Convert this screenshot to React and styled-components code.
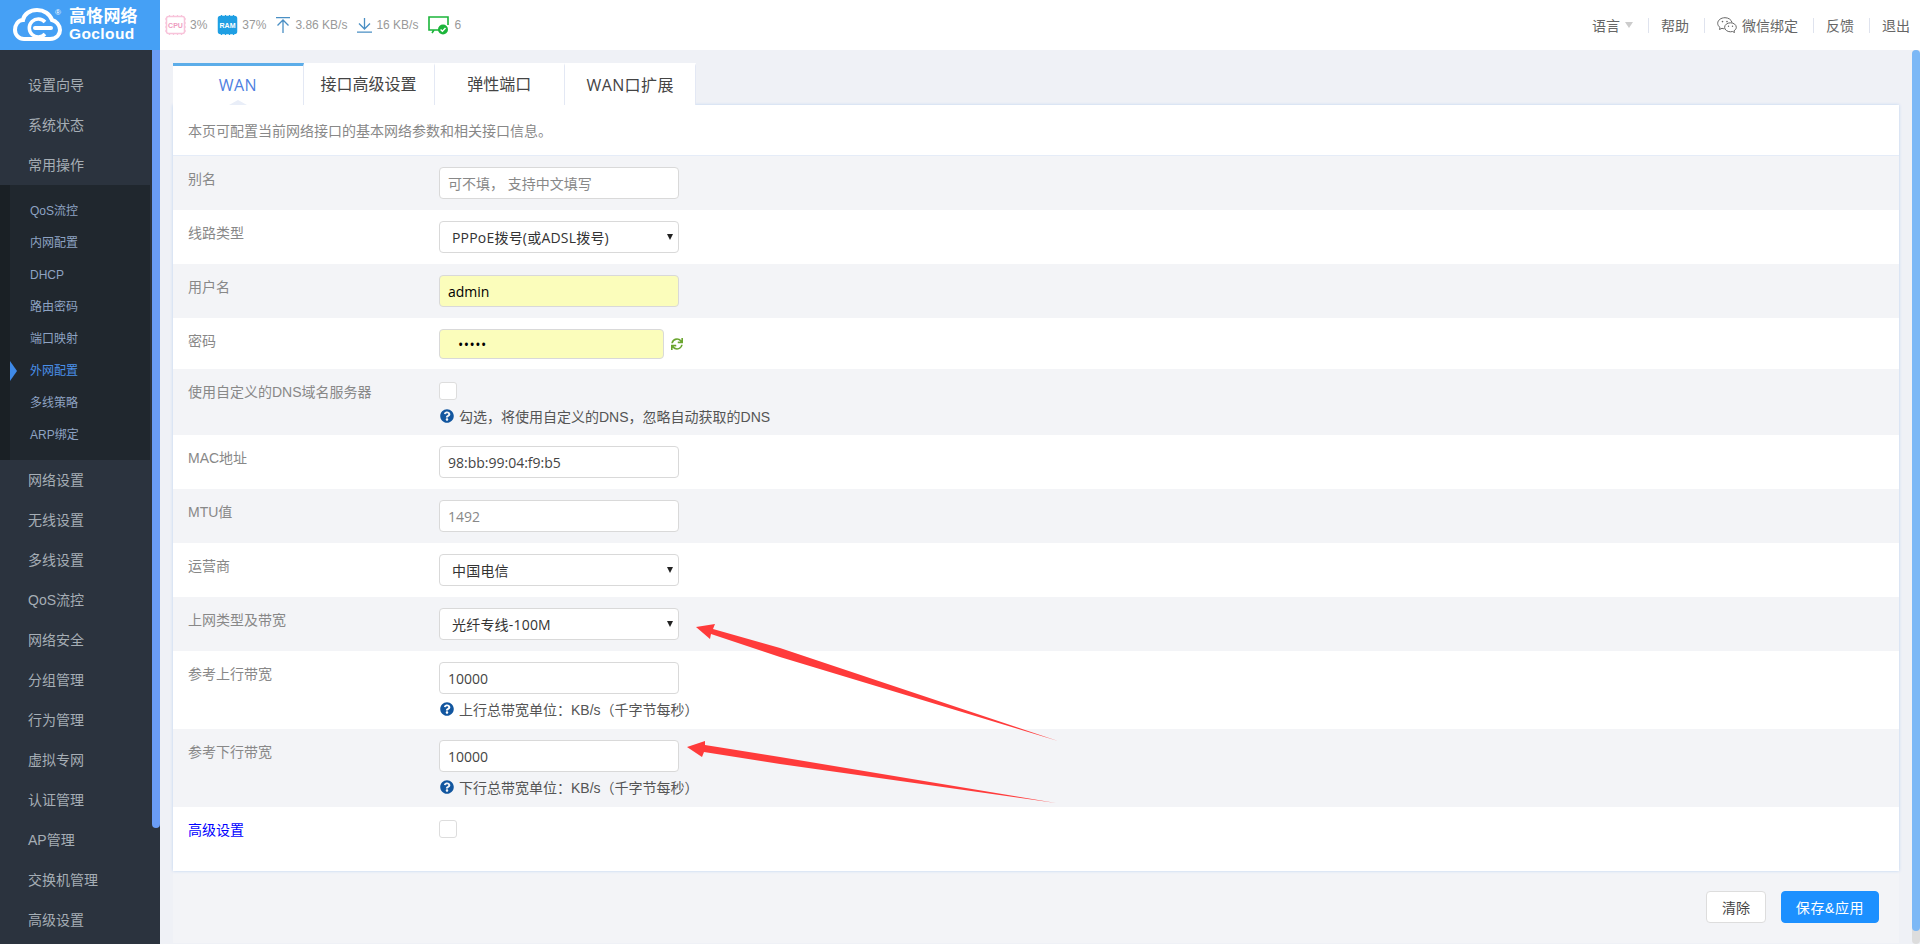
import React from "react"
import styled, { createGlobalStyle } from "styled-components"
import { FaQuestionCircle, FaSync } from "react-icons/fa"

const GlobalStyle = createGlobalStyle`
  html, body {
    margin: 0;
    padding: 0;
    height: 100%;
    overflow: hidden;
    font-family: "Liberation Sans", "Noto Sans CJK SC", sans-serif;
  }
  * { box-sizing: border-box; }
`

const Page = styled.div`
  width: 1920px;
  height: 944px;
  display: flex;
  flex-direction: column;
  overflow: hidden;
  background: #eff1f6;
`

/* top bar */
const Header = styled.header`
  flex: 0 0 50px;
  display: flex;
  align-items: center;
  background: #fff;
`
const Logo = styled.div`
  width: 160px;
  height: 50px;
  flex: none;
  display: flex;
  align-items: center;
  padding-left: 12px;
  background: #45a0f5;
  color: #fff;
`
const LogoText = styled.div`
  margin-left: 5px;
  display: flex;
  flex-direction: column;
  line-height: 1;
`
const LogoCn = styled.span`
  font-size: 17px;
  font-weight: 700;
  letter-spacing: 0.2px;
  height: 18px;
  line-height: 18px;
`
const LogoEn = styled.span`
  font-size: 15.5px;
  font-weight: 700;
  letter-spacing: 0.4px;
  line-height: 16px;
`
const StatusBar = styled.div`
  display: flex;
  align-items: center;
  gap: 10px;
  padding-left: 5px;
  font-size: 12px;
  color: #999;
`
const StatusItem = styled.span`
  display: flex;
  align-items: center;
  gap: ${(p) => p.$gap || 4}px;
`
const HeaderLinks = styled.nav`
  margin-left: auto;
  padding-right: 10px;
  display: flex;
  align-items: center;
  font-size: 14px;
  color: #666;
`
const HeaderLink = styled.span`
  display: flex;
  align-items: center;
  gap: 5px;
`
const Caret = styled.i`
  width: 0;
  height: 0;
  border-left: 4px solid transparent;
  border-right: 4px solid transparent;
  border-top: 6px solid #ccc;
`
const Sep = styled.i`
  width: 1px;
  height: 15px;
  margin: 0 12px 0 15px;
  background: #dfe3ee;
`

/* sidebar */
const Body = styled.div`
  flex: 1;
  display: flex;
  min-height: 0;
`
const Sidebar = styled.aside`
  width: 160px;
  flex: none;
  display: flex;
  background: #2b333e;
`
const Menu = styled.ul`
  width: 152px;
  margin: 0;
  padding: 15px 0 0;
  list-style: none;
`
const MenuItem = styled.li`
  height: 40px;
  line-height: 40px;
  padding-left: 28px;
  font-size: 14px;
  color: #a6aeb5;
`
const SubMenu = styled.ul`
  margin: 0 2px 0 0;
  padding: 10px 0 9px 20px;
  list-style: none;
  height: 275px;
  background: #20272e;
  border-left: 10px solid #1a2025;
`
const SubItem = styled.li`
  position: relative;
  height: 32px;
  line-height: 32px;
  font-size: 12px;
  color: ${(p) => (p.$active ? "#4a90ea" : "#8ea3c3")};
  &::before {
    content: "";
    display: ${(p) => (p.$active ? "block" : "none")};
    position: absolute;
    left: -20px;
    top: 6px;
    border-top: 10px solid transparent;
    border-bottom: 10px solid transparent;
    border-left: 7px solid #3f8ae8;
  }
`
const SideTrack = styled.div`
  width: 8px;
  flex: none;
`
const SideThumb = styled.div`
  height: 778px;
  background: #6a9cf5;
  border-radius: 0 0 4px 4px;
`

/* main area */
const Main = styled.main`
  flex: 1;
  display: flex;
  min-width: 0;
`
const Content = styled.div`
  flex: 1;
  min-width: 0;
  padding: 13px 13px 1px;
  display: flex;
  flex-direction: column;
`
const PageTrack = styled.div`
  width: 8px;
  flex: none;
  background: #ddd;
  border-radius: 4px;
`
const PageThumb = styled.div`
  height: 881px;
  background: #7cb8f6;
  border-radius: 4px;
`
const Tabs = styled.div`
  display: flex;
  flex: none;
`
const Tab = styled.div`
  position: relative;
  width: 130.75px;
  height: 42px;
  padding-bottom: 2px;
  line-height: 20px;
  display: flex;
  align-items: center;
  justify-content: center;
  background: #fff;
  border-top: 3px solid ${(p) => (p.$active ? "#5cade9" : "#fff")};
  border-right: 1px solid #e3e8f4;
  font-size: 16px;
  color: ${(p) => (p.$active ? "#4f80e1" : "#444")};
  &::after {
    content: "";
    display: ${(p) => (p.$active ? "block" : "none")};
    position: absolute;
    left: 50%;
    bottom: 0;
    margin-left: -9px;
    border-left: 9px solid transparent;
    border-right: 9px solid transparent;
    border-bottom: 5px solid #e9eef8;
  }
`
const TabLatin = styled.span`
  font-family: "Open Sans", "Noto Sans CJK SC", sans-serif;
  letter-spacing: 0.4px;
`
const Sheet = styled.div`
  flex: 1;
  display: flex;
  flex-direction: column;
  background: #f3f4f7;
`
const Panel = styled.section`
  background: #fff;
  box-shadow: 0 0 3px #bcd2f2;
`
const Intro = styled.div`
  height: 51px;
  padding: 16px 15px 0;
  line-height: 20px;
  font-size: 14px;
  color: #888;
  border-bottom: 1px solid #e5ecf8;
`
const Row = styled.div`
  display: grid;
  grid-template-columns: 266px 1fr;
  height: ${(p) => p.$height || 54}px;
  background: ${(p) => (p.$shade ? "#f3f4f7" : "#fff")};
`
const Label = styled.div`
  padding: 13px 0 0 15px;
  line-height: 20px;
  font-size: 14px;
  color: ${(p) => (p.$link ? "#0000ff" : "#888")};
`
const Field = styled.div`
  padding-top: ${(p) => p.$top || 11}px;
`
const Inline = styled.div`
  display: flex;
  align-items: center;
  gap: 7px;
`
const Input = styled.input`
  display: block;
  width: ${(p) => p.$width || 240}px;
  height: ${(p) => p.$h || 32}px;
  padding: 0 0 0 ${(p) => p.$pad || 8}px;
  border: 1px solid #d9d9d9;
  border-radius: 4px;
  outline: none;
  background: ${(p) => (p.$filled ? "#fbfdbb" : "#fff")};
  font-family: "Open Sans", "Noto Sans CJK SC", sans-serif;
  font-size: 14px;
  letter-spacing: ${(p) => (p.$pad ? "0.5px" : "normal")};
  color: ${(p) => (p.$filled ? "#000" : p.$muted ? "#888" : "#444")};
  &::placeholder {
    color: #888;
    opacity: 1;
  }
`
const SelectWrap = styled.div`
  position: relative;
  width: 240px;
  &::after {
    content: "";
    position: absolute;
    right: 6px;
    top: 13px;
    border-left: 3px solid transparent;
    border-right: 3px solid transparent;
    border-top: 6px solid #222;
  }
`
const Select = styled.select`
  display: block;
  width: 100%;
  height: 32px;
  padding: 0 0 0 12px;
  border: 1px solid #d9d9d9;
  border-radius: 4px;
  outline: none;
  appearance: none;
  background: #fff;
  font-family: "Open Sans", "Noto Sans CJK SC", sans-serif;
  font-size: 14px;
  letter-spacing: 0.2px;
  color: #333;
`
const Check = styled.input`
  display: block;
  width: 18px;
  height: 18px;
  margin: 0;
  appearance: none;
  background: #fff;
  border: 1px solid #ddd;
  border-radius: 3px;
`
const Help = styled.div`
  display: flex;
  align-items: center;
  gap: 5px;
  height: 20px;
  margin-top: ${(p) => p.$top || 5}px;
  font-size: 14px;
  color: #555;
  svg {
    color: #12569f;
    margin-left: 1px;
  }
`
const Footer = styled.div`
  flex: 1;
  display: flex;
  justify-content: flex-end;
  gap: 15px;
  padding: 20px 20px 0 0;
`
const Button = styled.button`
  height: 32px;
  width: ${(p) => p.$width}px;
  padding: 0;
  border: 1px solid ${(p) => (p.$primary ? "#1c90ff" : "#ddd")};
  border-radius: 4px;
  background: ${(p) => (p.$primary ? "#1c90ff" : "#fff")};
  font-family: "Liberation Sans", "Noto Sans CJK SC", sans-serif;
  font-size: 14px;
  letter-spacing: ${(p) => (p.$primary ? "0.6px" : "normal")};
  color: ${(p) => (p.$primary ? "#fff" : "#444")};
`
const Overlay = styled.svg`
  position: fixed;
  left: 0;
  top: 0;
  pointer-events: none;
`

const LogoMark = () => (
  <svg width="52" height="36" viewBox="12 8 52 36" fill="none" stroke="#fff">
    <path
      strokeWidth="4"
      d="M24 40H50C57 40 60 35 60 31C60 26 56 22 52 21C50 15 44 11 37 11C30 11 24 15 23 21C18 21 15 26 15 31C15 36 19 40 24 40Z"
    />
    <path strokeWidth="3.5" d="M45 23A9 9 0 1 0 45 35" />
    <path strokeWidth="4" strokeLinecap="round" d="M35 29H51" />
    <text x="58" y="16" fontSize="8" fill="#fff" stroke="none" textAnchor="middle">®</text>
  </svg>
)

const ChipIcon = ({ label, solid }) => {
  const c = solid ? "#1f9fe3" : "#f8c4da"
  const teeth = [4, 8, 12, 16]
  return (
    <svg width="21" height="20" viewBox="0 0 21 20">
      {teeth.map((x) => (
        <path key={x} d={`M${x + 0.5} 0V20`} stroke={c} strokeWidth="1.2" />
      ))}
      {teeth.map((y) => (
        <path key={y} d={`M0 ${y}H21`} stroke={solid ? "none" : c} strokeWidth="1.2" />
      ))}
      <rect
        x="1.5"
        y="1.5"
        width="18"
        height="17"
        rx="2"
        fill={solid ? c : "#fff"}
        stroke={c}
        strokeWidth="1.5"
      />
      <text
        x="10.5"
        y="12.5"
        fontSize="7"
        fontWeight="700"
        textAnchor="middle"
        fill={solid ? "#fff" : "#ee9cc0"}
        fontFamily="Liberation Sans"
      >
        {label}
      </text>
    </svg>
  )
}

const UpIcon = () => (
  <svg width="14" height="16" viewBox="0 0 14 16" fill="none" stroke="#4a8fc4" strokeWidth="1.3">
    <path d="M0 .7H14M7 3V16M1.5 8.5L7 3L12.5 8.5" />
  </svg>
)

const DownIcon = () => (
  <svg width="15" height="15" viewBox="0 0 15 15" fill="none" stroke="#4a8fc4" strokeWidth="1.3">
    <path d="M0 14.2H15M7.5 0V11M2 5.5L7.5 11L13 5.5" />
  </svg>
)

const ScreenIcon = () => (
  <svg width="21" height="19" viewBox="0 0 21 19" fill="none">
    <path d="M6 14H1V1H20V9M12 14H6L4 17" stroke="#1bb53a" strokeWidth="1.6" />
    <circle cx="15" cy="13.5" r="5" fill="#1bb53a" />
    <path d="M12.6 13.5L14.4 15.3L17.5 12" stroke="#fff" strokeWidth="1.4" />
  </svg>
)

const WechatIcon = () => (
  <svg width="20" height="16" viewBox="0 0 20 16" fill="none" stroke="#666" strokeWidth="1">
    <path d="M8 .7C4 .7 .7 3.2 .7 6.3C.7 8 1.7 9.5 3 10.5L2.5 12.5L5 11.3C5.8 11.6 6.5 11.7 7.3 11.8" />
    <path d="M8 .7C11.5 .7 14.5 2.8 15 5.6" />
    <path d="M13.5 5.8C10.3 5.8 7.6 7.8 7.6 10.3C7.6 12.8 10.3 14.8 13.5 14.8C14.2 14.8 14.8 14.7 15.4 14.5L17.5 15.5L17 13.8C18.4 12.9 19.3 11.7 19.3 10.3C19.3 7.8 16.7 5.8 13.5 5.8Z" />
    <circle cx="5.5" cy="4.6" r=".8" fill="#666" stroke="none" />
    <circle cx="10" cy="4.6" r=".8" fill="#666" stroke="none" />
    <circle cx="11.5" cy="9.3" r=".7" fill="#666" stroke="none" />
    <circle cx="15.5" cy="9.3" r=".7" fill="#666" stroke="none" />
  </svg>
)

const topItems = ["设置向导", "系统状态", "常用操作"]
const subItems = ["QoS流控", "内网配置", "DHCP", "路由密码", "端口映射", "外网配置", "多线策略", "ARP绑定"]
const lowerItems = [
  "网络设置",
  "无线设置",
  "多线设置",
  "QoS流控",
  "网络安全",
  "分组管理",
  "行为管理",
  "虚拟专网",
  "认证管理",
  "AP管理",
  "交换机管理",
  "高级设置",
]

const HelpLine = ({ children, top }) => (
  <Help $top={top}>
    <FaQuestionCircle size={14} />
    {children}
  </Help>
)

const App = () => {
  return (
    <Page>
      <GlobalStyle />
      <Header>
        <Logo>
          <LogoMark />
          <LogoText>
            <LogoCn>高恪网络</LogoCn>
            <LogoEn>Gocloud</LogoEn>
          </LogoText>
        </Logo>
        <StatusBar>
          <StatusItem>
            <ChipIcon label="CPU" />
            3%
          </StatusItem>
          <StatusItem>
            <ChipIcon label="RAM" solid />
            37%
          </StatusItem>
          <StatusItem $gap={5}>
            <UpIcon />
            3.86 KB/s
          </StatusItem>
          <StatusItem>
            <DownIcon />
            16 KB/s
          </StatusItem>
          <StatusItem $gap={5}>
            <ScreenIcon />6
          </StatusItem>
        </StatusBar>
        <HeaderLinks>
          <HeaderLink>
            语言
            <Caret />
          </HeaderLink>
          <Sep />
          <HeaderLink>帮助</HeaderLink>
          <Sep />
          <HeaderLink>
            <WechatIcon />
            微信绑定
          </HeaderLink>
          <Sep />
          <HeaderLink>反馈</HeaderLink>
          <Sep />
          <HeaderLink>退出</HeaderLink>
        </HeaderLinks>
      </Header>
      <Body>
        <Sidebar>
          <Menu>
            {topItems.map((t) => (
              <MenuItem key={t}>{t}</MenuItem>
            ))}
            <SubMenu>
              {subItems.map((t) => (
                <SubItem key={t} $active={t === "外网配置"}>
                  {t}
                </SubItem>
              ))}
            </SubMenu>
            {lowerItems.map((t) => (
              <MenuItem key={t}>{t}</MenuItem>
            ))}
          </Menu>
          <SideTrack>
            <SideThumb />
          </SideTrack>
        </Sidebar>
        <Main>
          <Content>
            <Tabs>
              <Tab $active>
                <TabLatin>WAN</TabLatin>
              </Tab>
              <Tab>接口高级设置</Tab>
              <Tab>弹性端口</Tab>
              <Tab>
                <TabLatin>WAN口扩展</TabLatin>
              </Tab>
            </Tabs>
            <Sheet>
              <Panel>
                <Intro>本页可配置当前网络接口的基本网络参数和相关接口信息。</Intro>
                <Row $shade>
                  <Label>别名</Label>
                  <Field>
                    <Input placeholder="可不填， 支持中文填写" />
                  </Field>
                </Row>
                <Row>
                  <Label>线路类型</Label>
                  <Field>
                    <SelectWrap>
                      <Select defaultValue="pppoe">
                        <option value="pppoe">PPPoE拨号(或ADSL拨号)</option>
                      </Select>
                    </SelectWrap>
                  </Field>
                </Row>
                <Row $shade>
                  <Label>用户名</Label>
                  <Field>
                    <Input $filled defaultValue="admin" />
                  </Field>
                </Row>
                <Row $height={51}>
                  <Label>密码</Label>
                  <Field>
                    <Inline>
                      <Input $filled $width={225} $h={30} $pad={18} type="password" defaultValue="admin" />
                      <FaSync size={12} color="#6aa52f" />
                    </Inline>
                  </Field>
                </Row>
                <Row $shade $height={66}>
                  <Label>使用自定义的DNS域名服务器</Label>
                  <Field $top={13}>
                    <Check type="checkbox" />
                    <HelpLine top={6}>勾选，将使用自定义的DNS，忽略自动获取的DNS</HelpLine>
                  </Field>
                </Row>
                <Row>
                  <Label>MAC地址</Label>
                  <Field>
                    <Input defaultValue="98:bb:99:04:f9:b5" />
                  </Field>
                </Row>
                <Row $shade>
                  <Label>MTU值</Label>
                  <Field>
                    <Input $muted defaultValue="1492" />
                  </Field>
                </Row>
                <Row>
                  <Label>运营商</Label>
                  <Field>
                    <SelectWrap>
                      <Select defaultValue="ct">
                        <option value="ct">中国电信</option>
                      </Select>
                    </SelectWrap>
                  </Field>
                </Row>
                <Row $shade>
                  <Label>上网类型及带宽</Label>
                  <Field>
                    <SelectWrap>
                      <Select defaultValue="100">
                        <option value="100">光纤专线-100M</option>
                      </Select>
                    </SelectWrap>
                  </Field>
                </Row>
                <Row $height={78}>
                  <Label>参考上行带宽</Label>
                  <Field>
                    <Input defaultValue="10000" />
                    <HelpLine>上行总带宽单位：KB/s（千字节每秒）</HelpLine>
                  </Field>
                </Row>
                <Row $shade $height={78}>
                  <Label>参考下行带宽</Label>
                  <Field>
                    <Input defaultValue="10000" />
                    <HelpLine>下行总带宽单位：KB/s（千字节每秒）</HelpLine>
                  </Field>
                </Row>
                <Row $height={64}>
                  <Label $link>高级设置</Label>
                  <Field $top={13}>
                    <Check type="checkbox" />
                  </Field>
                </Row>
              </Panel>
              <Footer>
                <Button $width={60}>清除</Button>
                <Button $width={98} $primary>
                  保存&应用
                </Button>
              </Footer>
            </Sheet>
          </Content>
          <PageTrack>
            <PageThumb />
          </PageTrack>
        </Main>
      </Body>
      <Overlay width="1920" height="944" viewBox="0 0 1920 944">
        <polygon
          fill="#ff3b3b"
          points="696,627 715,624 713,629 780,648 1058,741 780,657 711,634 710,639"
        />
        <polygon
          fill="#ff3b3b"
          points="687,747 705,741 705,745 780,757 1056,803 780,764 704,752 702,757"
        />
      </Overlay>
    </Page>
  )
}

export default App
